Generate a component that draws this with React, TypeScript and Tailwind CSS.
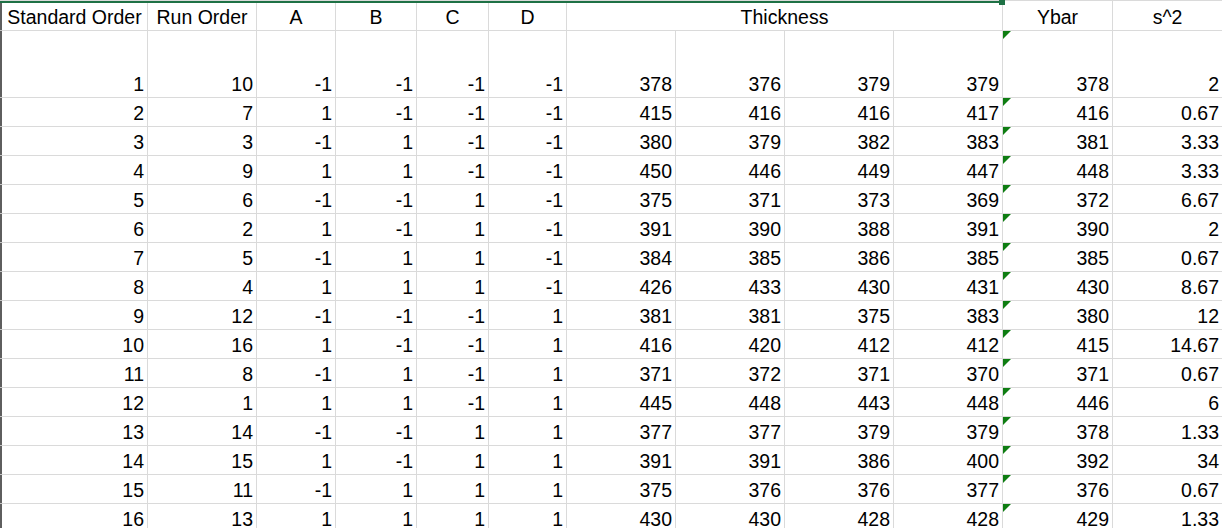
import React from "react";

const W = [
  "w-[146px]",
  "w-[109px]",
  "w-[79px]",
  "w-[81px]",
  "w-[72px]",
  "w-[78px]",
  "w-[109px]",
  "w-[109px]",
  "w-[109px]",
  "w-[109px]",
  "w-[110px]",
  "w-[110px]",
];

const rows: (number | string)[][] = [
  [1, 10, -1, -1, -1, -1, 378, 376, 379, 379, 378, 2],
  [2, 7, 1, -1, -1, -1, 415, 416, 416, 417, 416, 0.67],
  [3, 3, -1, 1, -1, -1, 380, 379, 382, 383, 381, 3.33],
  [4, 9, 1, 1, -1, -1, 450, 446, 449, 447, 448, 3.33],
  [5, 6, -1, -1, 1, -1, 375, 371, 373, 369, 372, 6.67],
  [6, 2, 1, -1, 1, -1, 391, 390, 388, 391, 390, 2],
  [7, 5, -1, 1, 1, -1, 384, 385, 386, 385, 385, 0.67],
  [8, 4, 1, 1, 1, -1, 426, 433, 430, 431, 430, 8.67],
  [9, 12, -1, -1, -1, 1, 381, 381, 375, 383, 380, 12],
  [10, 16, 1, -1, -1, 1, 416, 420, 412, 412, 415, 14.67],
  [11, 8, -1, 1, -1, 1, 371, 372, 371, 370, 371, 0.67],
  [12, 1, 1, 1, -1, 1, 445, 448, 443, 448, 446, 6],
  [13, 14, -1, -1, 1, 1, 377, 377, 379, 379, 378, 1.33],
  [14, 15, 1, -1, 1, 1, 391, 391, 386, 400, 392, 34],
  [15, 11, -1, 1, 1, 1, 375, 376, 376, 377, 376, 0.67],
  [16, 13, 1, 1, 1, 1, 430, 430, 428, 428, 429, 1.33],
];

function Tri() {
  return (
    <svg
      className="absolute left-0 top-0"
      width="8"
      height="8"
      viewBox="0 0 8 8"
    >
      <polygon points="0,0 8,0 0,8" fill="#0e7d12" />
    </svg>
  );
}

function LeftStrip() {
  return <div className="w-[2px] shrink-0 bg-[#5e5e5e] border-b border-[#c4c4c4]" />;
}

export default function App() {
  const headers = ["Standard Order", "Run Order", "A", "B", "C", "D"];
  return (
    <div className="relative w-[1222px] h-[528px] overflow-hidden bg-white text-black font-['Liberation_Sans',Arial,sans-serif] text-[19.5px] leading-[20px]">
      {/* header row */}
      <div className="flex h-[31px] border-t border-[#dadada]">
        <LeftStrip />
        {headers.map((h, i) => (
          <div
            key={h}
            className={`${W[i]} shrink-0 flex items-end justify-center pb-[3px] border-r border-b border-[#dadada] whitespace-nowrap`}
          >
            {h}
          </div>
        ))}
        <div className="w-[436px] shrink-0 flex items-end justify-center pb-[3px] border-r border-b border-[#dadada]">
          Thickness
        </div>
        <div className={`${W[10]} shrink-0 flex items-end justify-center pb-[3px] border-r border-b border-[#dadada]`}>
          Ybar
        </div>
        <div className={`${W[11]} shrink-0 flex items-end justify-center pb-[3px] border-r border-b border-[#dadada]`}>
          s^2
        </div>
      </div>

      {rows.map((r, ri) => (
        <div key={ri} className={`flex ${ri === 0 ? "h-[67px]" : "h-[29px]"}`}>
          <LeftStrip />
          {r.map((v, ci) => (
            <div
              key={ci}
              className={`${W[ci]} shrink-0 relative flex items-end justify-end pr-[3px] pb-[3px] border-r border-b border-[#dadada] whitespace-nowrap`}
            >
              {ci === 10 && <Tri />}
              {v}
            </div>
          ))}
        </div>
      ))}

      {/* selection border overlay */}
      <div className="absolute left-0 top-[1px] w-[1000px] h-[2px] bg-[#1e7145]" />
      <div className="absolute left-[999px] top-0 w-[6px] h-[5px] bg-[#1e7145]" />
    </div>
  );
}
